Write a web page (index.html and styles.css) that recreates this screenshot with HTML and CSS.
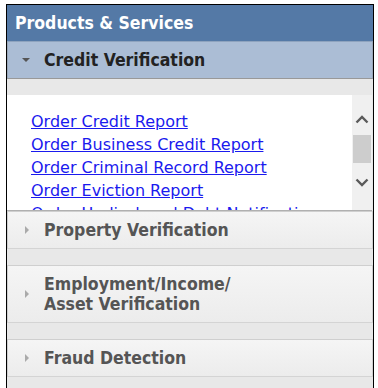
FILE: index.html
```
<!DOCTYPE html>
<html>
<head>
<meta charset="utf-8">
<link rel="stylesheet" href="styles.css">
</head>
<body>
<div class="panel">
  <div class="title">Products &amp; Services</div>
  <div class="acc-head open">
    <span class="tri tri-down"></span>
    <span class="acc-label">Credit Verification</span>
  </div>
  <div class="gap"></div>
  <div class="content">
    <div class="links">
      <a href="#">Order Credit Report</a>
      <a href="#">Order Business Credit Report</a>
      <a href="#">Order Criminal Record Report</a>
      <a href="#">Order Eviction Report</a>
      <a href="#">Order Undisclosed Debt Notification</a>
    </div>
    <div class="scrollbar">
      <svg class="arrow" width="16" height="12" viewBox="0 0 16 12"><path d="M2.5 9.5 L8 4 L13.5 9.5" fill="none" stroke="#5a5a5a" stroke-width="2.4"/></svg>
      <div class="thumb"></div>
      <div class="track-fill"></div>
      <svg class="arrow" width="16" height="12" viewBox="0 0 16 12"><path d="M2.5 2.5 L8 8 L13.5 2.5" fill="none" stroke="#5a5a5a" stroke-width="2.4"/></svg>
    </div>
  </div>
  <div class="acc-head closed">
    <span class="tri tri-right"></span>
    <span class="acc-label">Property Verification</span>
  </div>
  <div class="gap"></div>
  <div class="acc-head closed">
    <span class="tri tri-right"></span>
    <span class="acc-label">Employment/Income/<br>Asset Verification</span>
  </div>
  <div class="gap"></div>
  <div class="acc-head closed">
    <span class="tri tri-right"></span>
    <span class="acc-label">Fraud Detection</span>
  </div>
  <div class="gap last"></div>
</div>
</body>
</html>
```
FILE: styles.css
```
html, body {
  margin: 0;
  padding: 0;
  background: #ffffff;
}
body {
  font-family: "DejaVu Sans Condensed", "DejaVu Sans", sans-serif;
}
.panel {
  margin: 4px 0 0 6px;
  width: 366px;
  border: 1px solid #000;
  border-bottom: none;
  background: #e8e8e8;
}
.title {
  background: #5479a6;
  color: #fff;
  font-weight: bold;
  font-size: 17.5px;
  height: 36px;
  line-height: 36px;
  padding-left: 8px;
  border-bottom: 1px solid #8ea3be;
}
.acc-head {
  display: flex;
  align-items: center;
  padding: 8px 0 8px 0;
  border: 1px solid #cfcfcf;
  border-top: none;
  font-weight: bold;
  font-size: 17.5px;
  line-height: 20px;
}
.acc-head.open {
  background: #abbdd5;
  color: #222;
  border-color: #9aa7b8;
  border-bottom: 1px solid #999;
}
.acc-head.closed {
  background: linear-gradient(#f5f5f5, #ececec);
  color: #555;
  border-top: 1px solid #cfcfcf;
  border-bottom: 1px solid #d4d4d4;
}
.tri {
  display: inline-block;
  width: 0;
  height: 0;
}
.tri-down {
  border-left: 4px solid transparent;
  border-right: 4px solid transparent;
  border-top: 4px solid #555;
  margin-left: 14px;
  margin-right: 14px;
}
.tri-right {
  border-top: 4px solid transparent;
  border-bottom: 4px solid transparent;
  border-left: 4px solid #aaa;
  margin-left: 17px;
  margin-right: 15px;
}
.gap {
  height: 16px;
  background: #e8e8e8;
}
.gap.last {
  height: 14px;
}
.content {
  display: flex;
  height: 115px;
  background: #fff;
  border-bottom: 1px solid #b0b0b0;
  overflow: hidden;
  margin-right: 1px;
}
.links {
  flex: 1;
  padding: 15px 0 0 24px;
  overflow: hidden;
}
.links a {
  display: block;
  color: #1a1aee;
  font-family: "DejaVu Sans", sans-serif;
  font-size: 16px;
  line-height: 23px;
  white-space: nowrap;
}
.scrollbar {
  width: 20px;
  background: #f0f0f0;
  display: flex;
  flex-direction: column;
  align-items: center;
  padding-top: 18px;
}
.arrow {
  display: block;
  margin: 0 auto;
}
.thumb {
  width: 18px;
  height: 28px;
  background: #cdcdcd;
  margin-top: 10px;
}
.track-fill {
  height: 14px;
}
```
